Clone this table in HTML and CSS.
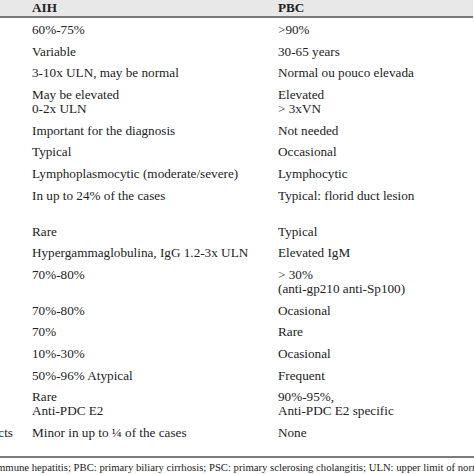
FILE: index.html
```html
<!DOCTYPE html>
<html lang="en">
<head>
<meta charset="utf-8">
<title>AIH vs PBC</title>
<link rel="stylesheet" href="styles.css">
</head>
<body>
<div class="frame">
  <div class="sheet">
    <table class="grid">
      <colgroup>
        <col class="c-label">
        <col class="c-aih">
        <col class="c-pbc">
      </colgroup>
      <thead>
        <tr><th></th><th>AIH</th><th>PBC</th></tr>
      </thead>
      <tbody>
        <tr class="first"><td class="label"></td><td>60%-75%</td><td>&gt;90%</td></tr>
        <tr><td class="label"></td><td>Variable</td><td>30-65 years</td></tr>
        <tr><td class="label"></td><td>3-10x ULN, may be normal</td><td>Normal ou pouco elevada</td></tr>
        <tr><td class="label"></td><td>May be elevated<br>0-2x ULN</td><td>Elevated<br>&gt; 3xVN</td></tr>
        <tr><td class="label"></td><td>Important for the diagnosis</td><td>Not needed</td></tr>
        <tr><td class="label"></td><td>Typical</td><td>Occasional</td></tr>
        <tr><td class="label"></td><td>Lymphoplasmocytic (moderate/severe)</td><td>Lymphocytic</td></tr>
        <tr><td class="label"></td><td>In up to 24% of the cases</td><td>Typical: florid duct lesion</td></tr>
        <tr class="spacer"><td colspan="3"></td></tr>
        <tr><td class="label"></td><td>Rare</td><td>Typical</td></tr>
        <tr><td class="label"></td><td>Hypergammaglobulina, IgG 1.2-3x ULN</td><td>Elevated IgM</td></tr>
        <tr><td class="label"></td><td>70%-80%</td><td>&gt; 30%<br>(anti-gp210 anti-Sp100)</td></tr>
        <tr><td class="label"></td><td>70%-80%</td><td>Ocasional</td></tr>
        <tr><td class="label"></td><td>70%</td><td>Rare</td></tr>
        <tr><td class="label"></td><td>10%-30%</td><td>Ocasional</td></tr>
        <tr><td class="label"></td><td>50%-96% Atypical</td><td>Frequent</td></tr>
        <tr><td class="label"></td><td>Rare<br>Anti-PDC E2</td><td>90%-95%,<br>Anti-PDC E2 specific</td></tr>
        <tr class="last"><td class="label">Bile duct defects</td><td>Minor in up to ¼ of the cases</td><td>None</td></tr>
      </tbody>
    </table>
  </div>
  <div class="notes">
    <p>AIH: autoimmune hepatitis; PBC: primary biliary cirrhosis; PSC: primary sclerosing cholangitis; ULN: upper limit of normal.</p>
  </div>
</div>
</body>
</html>
```
FILE: styles.css
```css
html, body {
  margin: 0;
  padding: 0;
  background: #ffffff;
}

body {
  width: 474px;
  height: 474px;
  overflow: hidden;
  font-family: "Liberation Serif", "Times New Roman", serif;
  color: #222222;
}

.frame {
  width: 474px;
  height: 474px;
  overflow: hidden;
}

.sheet {
  margin-left: -118px;
  width: 591px;
}

.grid {
  width: 591px;
  border-collapse: separate;
  border-spacing: 0;
  table-layout: fixed;
  font-size: 13.2px;
  line-height: 14px;
}

.c-label { width: 150px; }
.c-aih { width: 246px; }
.c-pbc { width: 195px; }

.grid th {
  background: #e8e8e8;
  font-weight: bold;
  text-align: left;
  padding: 1px 0;
  border-bottom: 2px solid #787878;
}

.grid td {
  padding: 3.85px 0;
  vertical-align: top;
  text-align: left;
}

.grid td.label {
  text-align: right;
  padding-right: 19px;
  white-space: nowrap;
}

.grid tr.first td {
  padding-top: 5px;
}

.grid tr.spacer td {
  padding: 0;
  height: 14px;
}

.grid tr.last td {
  padding-bottom: 15.85px;
}

.notes {
  width: 474px;
  border-top: 2px solid #7d7d7d;
  padding-top: 3px;
  font-size: 10.7px;
  line-height: 12px;
  white-space: nowrap;
  overflow: hidden;
}

.notes p {
  margin: 0 0 0 -49px;
}
```
